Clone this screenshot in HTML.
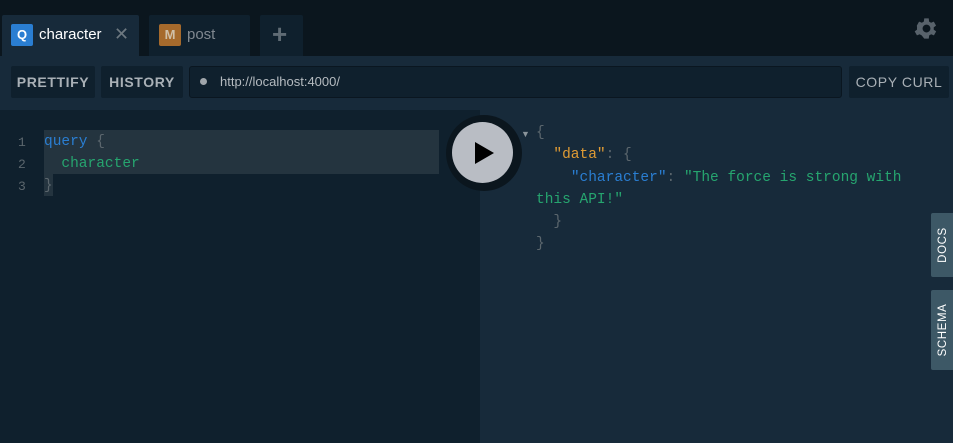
<!DOCTYPE html>
<html><head><meta charset="utf-8"><style>
*{margin:0;padding:0;box-sizing:border-box}
body{width:953px;height:443px;overflow:hidden;background:#0b161e;font-family:"Liberation Sans",sans-serif;position:relative}
.abs{position:absolute}
.tab{position:absolute;top:15px;height:41px;border-radius:2px 2px 0 0}
.mono{font-family:"Liberation Mono","DejaVu Sans Mono",monospace;font-size:14.5px;white-space:pre}
.btn{position:absolute;top:66px;height:32px;background:#0f202d;border-radius:2px;color:#a9b0b6;font-size:14px;font-weight:bold;letter-spacing:.6px;line-height:32px;text-align:center}
.side{position:absolute;left:931px;width:24px;background:#3d5866;border-radius:2px 0 0 2px;color:#fff;font-size:11.5px;letter-spacing:.6px}
.side span{position:absolute;left:50%;top:50%;transform:translate(-50%,-50%) rotate(-90deg);white-space:nowrap}
</style></head><body>
<div class="tab" style="left:2px;width:137px;background:#172a3a"></div>
<div class="abs" style="left:11px;top:24px;width:22px;height:22px;background:#2a7ed2;border-radius:2px;color:#fff;font-weight:bold;font-size:13px;text-align:center;line-height:22px">Q</div>
<div class="abs" style="left:39px;top:26px;color:#fff;font-size:15px">character</div>
<div class="abs" style="left:114px;top:24px;color:#6d7880;font-size:18px">✕</div>
<div class="tab" style="left:149px;width:101px;background:#0f202d"></div>
<div class="abs" style="left:159px;top:24px;width:22px;height:22px;background:#a66a2c;border-radius:2px;color:#d0c0a8;font-weight:bold;font-size:13px;text-align:center;line-height:22px">M</div>
<div class="abs" style="left:187px;top:26px;color:#808890;font-size:15px">post</div>
<div class="tab" style="left:260px;width:43px;background:#0f202d"></div>
<div class="abs" style="left:272px;top:19px;color:#5f6b74;font-size:26px;font-weight:bold">+</div>
<svg class="abs" style="left:913px;top:15px" width="27" height="27" viewBox="0 0 24 24"><path fill="#58626b" d="M19.4 13a7.5 7.5 0 000-2l2.1-1.6-2-3.5-2.5 1a7.6 7.6 0 00-1.7-1L15 3h-4l-.4 2.9a7.6 7.6 0 00-1.7 1l-2.5-1-2 3.5L4.6 11a7.5 7.5 0 000 2l-2.1 1.6 2 3.5 2.5-1a7.6 7.6 0 001.7 1L11 21h4l.4-2.9a7.6 7.6 0 001.7-1l2.5 1 2-3.5zM13 15.5a3.5 3.5 0 110-7 3.5 3.5 0 010 7z" transform="translate(-1 0)"/></svg>
<div class="abs" style="left:0;top:56px;width:953px;height:54px;background:#172a3a"></div>
<div class="btn" style="left:11px;width:84px">PRETTIFY</div>
<div class="btn" style="left:101px;width:82px">HISTORY</div>
<div class="abs" style="left:189px;top:66px;width:653px;height:32px;background:#0f202d;border:1px solid #0a1620;border-radius:3px"></div>
<div class="abs" style="left:200px;top:78px;width:7px;height:7px;border-radius:50%;background:#a0a6ab"></div>
<div class="abs" style="left:220px;top:74px;color:#b5bbc0;font-size:13px">http://localhost:4000/</div>
<div class="btn" style="left:849px;width:100px;font-weight:normal;font-size:14px">COPY CURL</div>
<div class="abs" style="left:0;top:110px;width:480px;height:333px;background:#0f202d"></div>
<div class="abs" style="left:480px;top:110px;width:473px;height:333px;background:#172a3a"></div>
<div class="abs" style="left:44px;top:130px;width:395px;height:44px;background:#24343f"></div>
<div class="abs" style="left:44px;top:174px;width:9px;height:22px;background:#24343f"></div>
<div class="abs mono" style="left:18px;top:132px;line-height:22px;color:#5b666d;font-size:13px">1
2
3</div>
<div class="abs mono" style="left:44px;top:131px;line-height:22px;color:#5b666d"><span style="color:#2a7ed2">query</span> {
  <span style="color:#26a56f">character</span>
}</div>
<div class="abs" style="left:446px;top:115px;width:76px;height:76px;border-radius:50%;background:#0b161e"></div>
<div class="abs" style="left:452px;top:122px;width:61px;height:61px;border-radius:50%;background:#b9bdc4"></div>
<svg class="abs" style="left:474px;top:141px" width="22" height="24"><path d="M1 1L20 12L1 23Z" fill="#000"/></svg>
<div class="abs" style="left:521px;top:129px;color:#8a949b;font-size:9px">▼</div>
<div class="abs mono" style="left:536px;top:122px;line-height:22.3px;color:#5b666d">{
  <span style="color:#e09b34">"data"</span>: {
    <span style="color:#2a7ed2">"character"</span>: <span style="color:#26a56f">"The force is strong with</span>
<span style="color:#26a56f">this API!"</span>
  }
}</div>
<div class="side" style="top:213px;height:64px"><span>DOCS</span></div>
<div class="side" style="top:290px;height:80px"><span>SCHEMA</span></div>
</body></html>
